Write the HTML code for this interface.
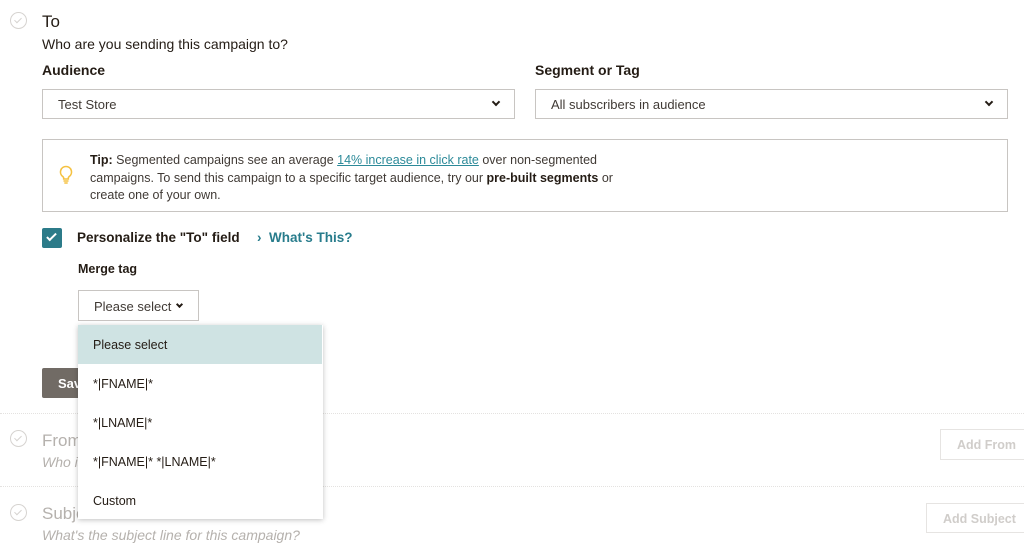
<!DOCTYPE html>
<html><head><meta charset="utf-8"><style>
*{margin:0;padding:0;box-sizing:border-box}
body{width:1024px;height:550px;overflow:hidden;background:#fff;font-family:"Liberation Sans",sans-serif;color:#241c15;position:relative}
.a{position:absolute;white-space:nowrap}
.sel{position:absolute;border:1px solid #c8c5c2;background:#fff;font-size:13px;color:#403a35}
.chev{position:absolute;width:6px;height:6px;border-right:2px solid #241c15;border-bottom:2px solid #241c15;transform:rotate(45deg)}
.circ{position:absolute;width:17px;height:17px;border:1.5px solid #d6d3d0;border-radius:50%}
.circ:after{content:"";position:absolute;left:5px;top:3px;width:3px;height:6px;border-right:1.5px solid #d6d3d0;border-bottom:1.5px solid #d6d3d0;transform:rotate(45deg)}
.dot{position:absolute;left:0;right:0;border-top:1px dotted #e4e2e0}
.item{position:absolute;left:0;width:244px;height:39px;font-size:12.5px;color:#241c15;padding:13px 0 0 15px}
</style></head><body>
<div class="circ" style="left:10px;top:12px"></div>
<div class="a" style="left:42px;top:12px;font-size:17px">To</div>
<div class="a" style="left:42px;top:36px;font-size:14px">Who are you sending this campaign to?</div>
<div class="a" style="left:42px;top:62px;font-size:14px;font-weight:bold">Audience</div>
<div class="a" style="left:535px;top:62px;font-size:14px;font-weight:bold">Segment or Tag</div>
<div class="sel" style="left:42px;top:89px;width:473px;height:30px"><span class="a" style="left:15px;top:7px">Test Store</span><span class="chev" style="left:450px;top:9px"></span></div>
<div class="sel" style="left:535px;top:89px;width:473px;height:30px"><span class="a" style="left:15px;top:7px">All subscribers in audience</span><span class="chev" style="left:450px;top:9px"></span></div>
<div style="position:absolute;left:42px;top:139px;width:966px;height:73px;border:1px solid #c8c5c2"></div>
<svg class="a" style="left:58px;top:165px" width="16" height="20" viewBox="0 0 16 20"><path d="M8 1.5a5.5 5.5 0 0 0-3.2 10c.6.5.9 1.1.9 1.8V14h4.6v-.7c0-.7.3-1.3.9-1.8A5.5 5.5 0 0 0 8 1.5z" fill="none" stroke="#f5c242" stroke-width="1.6"/><path d="M5.5 16h5M6.3 18h3.4" stroke="#f5c242" stroke-width="1.6"/></svg>
<div class="a" style="left:90px;top:152px;font-size:12.5px;line-height:17.5px;color:#403a35"><b style="color:#241c15">Tip:</b> Segmented campaigns see an average <span style="color:#2c8a99;text-decoration:underline">14% increase in click rate</span> over non-segmented<br>campaigns. To send this campaign to a specific target audience, try our <b style="color:#241c15">pre-built segments</b> or<br>create one of your own.</div>
<div style="position:absolute;left:42px;top:228px;width:20px;height:20px;background:#2c7b89;border-radius:2px"><div style="position:absolute;left:7px;top:3px;width:5px;height:10px;border-right:2px solid #fff;border-bottom:2px solid #fff;transform:rotate(45deg)"></div></div>
<div class="a" style="left:77px;top:230px;font-size:13.5px;font-weight:bold">Personalize the "To" field</div>
<div class="a" style="left:257px;top:230px;font-size:13.5px;font-weight:bold;color:#287c8c">›&nbsp; What's This?</div>
<div class="a" style="left:78px;top:262px;font-size:12.5px;font-weight:bold">Merge tag</div>
<div class="sel" style="left:78px;top:290px;width:121px;height:31px"><span class="a" style="left:15px;top:8px">Please select</span><span class="chev" style="left:98px;top:11px;width:5px;height:5px"></span></div>
<div style="position:absolute;left:42px;top:368px;width:60px;height:30px;background:#716b65;border-radius:2px"><span class="a" style="left:16px;top:8px;color:#fff;font-size:13px;font-weight:bold">Save</span></div>
<div class="dot" style="top:413px"></div>
<div class="dot" style="top:486px"></div>
<div class="circ" style="left:10px;top:430px"></div>
<div class="a" style="left:42px;top:431px;font-size:17px;color:#b5b1ad">From</div>
<div class="a" style="left:42px;top:454px;font-size:14px;font-style:italic;color:#b5b1ad">Who is it from?</div>
<div style="position:absolute;left:940px;top:429px;width:90px;height:31px;border:1px solid #e6e4e2"><span class="a" style="left:16px;top:8px;font-size:12.5px;font-weight:bold;color:#d0cdca">Add From</span></div>
<div class="circ" style="left:10px;top:504px"></div>
<div class="a" style="left:42px;top:504px;font-size:17px;color:#b5b1ad">Subject</div>
<div class="a" style="left:42px;top:527px;font-size:14px;font-style:italic;color:#b5b1ad">What's the subject line for this campaign?</div>
<div style="position:absolute;left:926px;top:503px;width:100px;height:30px;border:1px solid #e6e4e2"><span class="a" style="left:16px;top:8px;font-size:12.5px;font-weight:bold;color:#d0cdca">Add Subject</span></div>
<div style="position:absolute;left:78px;top:325px;width:245px;height:194px;background:#fff;box-shadow:0 1px 5px rgba(0,0,0,.25);overflow:hidden">
<div class="item" style="top:0;background:#cfe3e3">Please select</div>
<div class="item" style="top:39px">*|FNAME|*</div>
<div class="item" style="top:78px">*|LNAME|*</div>
<div class="item" style="top:117px">*|FNAME|* *|LNAME|*</div>
<div class="item" style="top:156px">Custom</div>
</div>
</body></html>
